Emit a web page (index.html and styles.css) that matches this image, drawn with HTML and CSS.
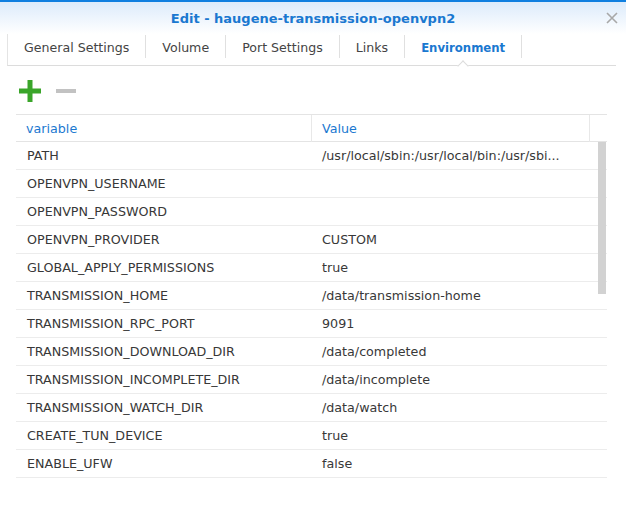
FILE: index.html
```html
<!DOCTYPE html>
<html lang="en">
<head>
  <meta charset="UTF-8" />
  <title>Edit - haugene-transmission-openvpn2</title>
  <link rel="stylesheet" href="styles.css">
</head>
<body>

<div class="window">
  <div class="titlebar">
    <span class="title">Edit - haugene-transmission-openvpn2</span>
    <span class="close">
      <svg width="12" height="12" viewBox="0 0 12 12"><path d="M1 1 L11 11 M11 1 L1 11" stroke="#a8a8a8" stroke-width="1.6"/></svg>
    </span>
  </div>

  <div class="tabs">
    <div class="tab">General Settings</div>
    <div class="tab">Volume</div>
    <div class="tab">Port Settings</div>
    <div class="tab">Links</div>
    <div class="tab active">Environment</div>
  </div>

  <div class="toolbar">
    <button class="tool add" title="Add">
      <svg width="22" height="22" viewBox="0 0 22 22"><path d="M8.5 0h5v8.5H22v5h-8.5V22h-5v-8.5H0v-5h8.5z" fill="#3aa52a"/></svg>
    </button>
    <button class="tool remove" title="Delete">
      <svg width="22" height="22" viewBox="0 0 22 22"><rect x="1" y="9" width="20" height="4" fill="#c2c2c2"/></svg>
    </button>
  </div>

  <div class="grid">
    <div class="grid-head">
      <div class="col">variable</div>
      <div class="col">Value</div>
      <div class="col gutter"></div>
    </div>
    <div class="grid-body">
      <div class="row"><div class="col">PATH</div><div class="col">/usr/local/sbin:/usr/local/bin:/usr/sbi...</div></div>
      <div class="row"><div class="col">OPENVPN_USERNAME</div><div class="col"></div></div>
      <div class="row"><div class="col">OPENVPN_PASSWORD</div><div class="col"></div></div>
      <div class="row"><div class="col">OPENVPN_PROVIDER</div><div class="col">CUSTOM</div></div>
      <div class="row"><div class="col">GLOBAL_APPLY_PERMISSIONS</div><div class="col">true</div></div>
      <div class="row"><div class="col">TRANSMISSION_HOME</div><div class="col">/data/transmission-home</div></div>
      <div class="row"><div class="col">TRANSMISSION_RPC_PORT</div><div class="col">9091</div></div>
      <div class="row"><div class="col">TRANSMISSION_DOWNLOAD_DIR</div><div class="col">/data/completed</div></div>
      <div class="row"><div class="col">TRANSMISSION_INCOMPLETE_DIR</div><div class="col">/data/incomplete</div></div>
      <div class="row"><div class="col">TRANSMISSION_WATCH_DIR</div><div class="col">/data/watch</div></div>
      <div class="row"><div class="col">CREATE_TUN_DEVICE</div><div class="col">true</div></div>
      <div class="row"><div class="col">ENABLE_UFW</div><div class="col">false</div></div>
      <div class="scrollbar"></div>
    </div>
  </div>
</div>

</body>
</html>
```

FILE: styles.css
```css
  body {
    margin: 0;
    font-family: "DejaVu Sans", Verdana, sans-serif;
    background: #fff;
  }
  .window {
    width: 626px;
    height: 508px;
    border-top: 2px solid #0f7fe0;
    box-sizing: border-box;
    background: #fff;
  }
  .titlebar {
    height: 32px;
    display: flex;
    align-items: center;
    justify-content: center;
    position: relative;
    background: linear-gradient(#dcebfb, #ffffff);
  }
  .title {
    font-weight: bold;
    font-size: 13px;
    color: #1a78d0;
  }
  .close {
    position: absolute;
    right: 8px;
    top: 10px;
    width: 12px;
    height: 12px;
  }
  .close svg {
    display: block;
  }
  .tabs {
    display: flex;
    height: 31px;
    margin: 0 10px 0 7px;
    border-bottom: 1px solid #dcdcdc;
    border-left: 1px solid #e4e4e4;
  }
  .tab {
    position: relative;
    padding: 0 16px;
    font-size: 12.6px;
    color: #444;
    line-height: 26px;
    margin-top: 1px;
    height: 23px;
    border-right: 1px solid #e0e0e0;
  }
  .tab.active {
    color: #1a78d0;
    font-weight: bold;
    font-size: 11.7px;
  }
  .tab.active::after {
    content: "";
    position: absolute;
    left: 50%;
    bottom: -12px;
    width: 7px;
    height: 7px;
    margin-left: -4px;
    background: #fff;
    border-top: 1px solid #dcdcdc;
    border-left: 1px solid #dcdcdc;
    transform: rotate(45deg);
  }
  .toolbar {
    display: flex;
    gap: 14px;
    padding: 14px 0 0 19px;
    height: 34px;
  }
  .tool {
    border: none;
    background: none;
    padding: 0;
    width: 22px;
    height: 22px;
    cursor: pointer;
  }
  .tool svg {
    display: block;
  }
  .grid {
    margin: 0 19px 0 16px;
    font-size: 12.7px;
    color: #383838;
  }
  .grid-head {
    display: grid;
    grid-template-columns: 296px 278px 1fr;
    height: 26px;
    border-top: 1px solid #e4e4e4;
    border-bottom: 1px solid #e4e4e4;
    color: #1a78d0;
  }
  .grid-head .col {
    line-height: 27px;
    padding-left: 10px;
    border-right: 1px solid #e8e8e8;
  }
  .grid-head .gutter {
    border-right: none;
  }
  .grid-body {
    position: relative;
  }
  .row {
    display: grid;
    grid-template-columns: 296px 1fr;
    height: 27px;
    border-bottom: 1px solid #ececec;
  }
  .row .col {
    line-height: 28px;
    padding-left: 11px;
    white-space: nowrap;
  }
  .row .col + .col {
    padding-left: 10px;
  }
  .scrollbar {
    position: absolute;
    top: 0;
    right: 1px;
    width: 8px;
    height: 152px;
    background: #d2d2d2;
  }
```
